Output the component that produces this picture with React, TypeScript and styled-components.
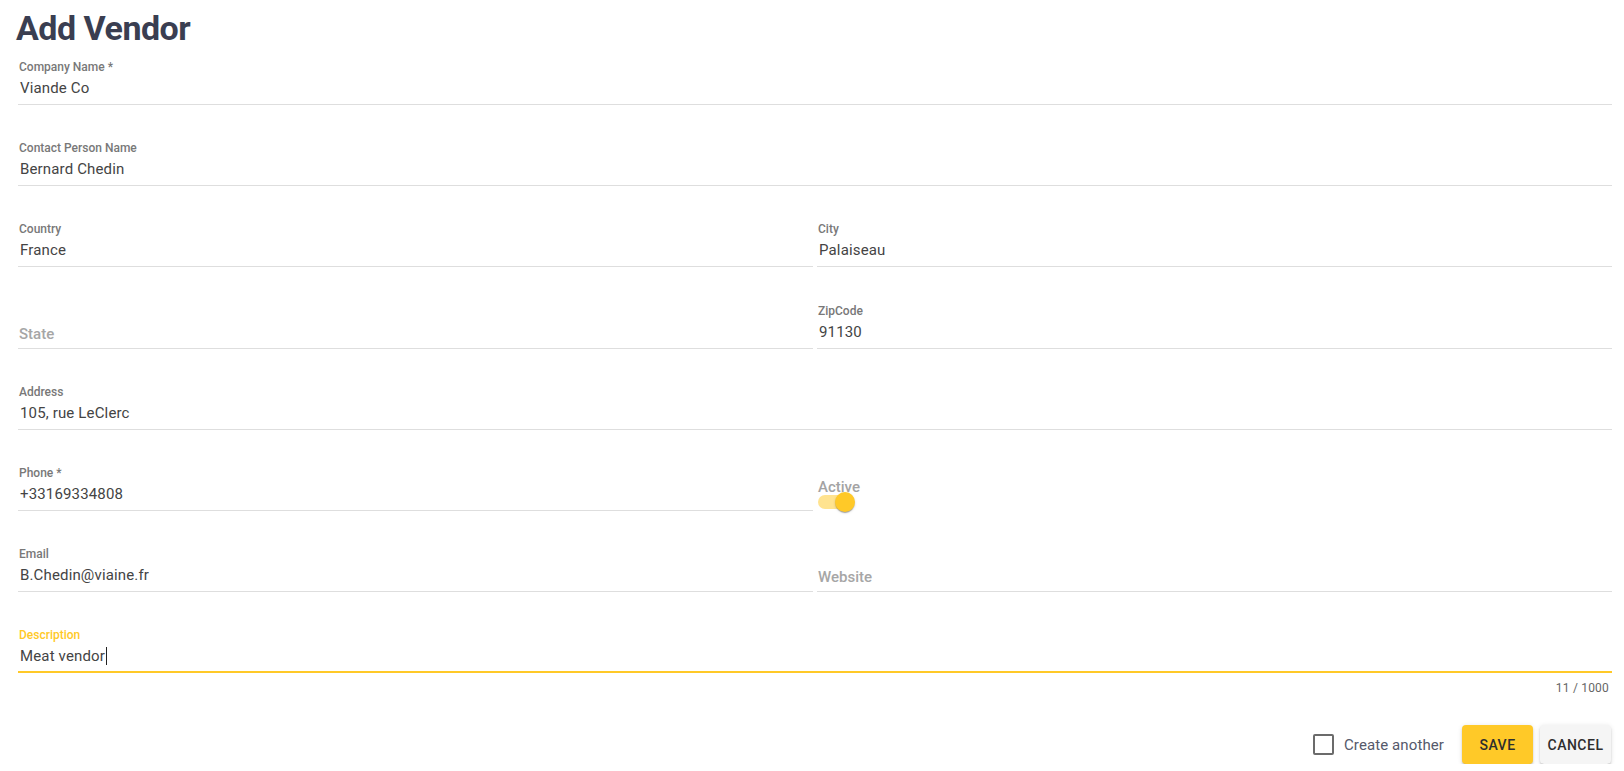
import styled, { createGlobalStyle } from "styled-components";

const GlobalStyle = createGlobalStyle`
    html, body {
        margin: 0;
        padding: 0;
        background: #ffffff;
        font-family: Roboto, "Liberation Sans", Arial, sans-serif;
    }
`;

const Page = styled.div`
    padding: 8px 12px 0 16px;
`;

const Title = styled.h1`
    margin: 0;
    font-size: 34px;
    line-height: 40px;
    font-weight: 700;
    letter-spacing: -0.5px;
    color: #3a3e51;
`;

const Form = styled.div`
    margin: 12px 0 0 2px;
    display: grid;
    grid-template-columns: 1fr 1fr;
    column-gap: 4px;
    row-gap: 36.2px;
`;

const Field = styled.div<{ $full?: boolean; $focused?: boolean; $plain?: boolean }>`
    grid-column: ${(p) => (p.$full ? "1 / -1" : "auto")};
    height: 45px;
    box-sizing: border-box;
    padding-left: 1px;
    border-bottom: ${(p) =>
        p.$plain ? "none" : p.$focused ? "2px solid #ffc928" : "1px solid #dedede"};
`;

const Label = styled.div<{ $focused?: boolean }>`
    height: 14px;
    font-size: 12px;
    line-height: 14px;
    font-weight: 500;
    color: ${(p) => (p.$focused ? "#ffc928" : "#787878")};
    margin-bottom: 4px;
`;

const Value = styled.div<{ $focused?: boolean }>`
    padding-left: 1px;
    font-size: 15px;
    line-height: 20px;
    letter-spacing: 0.15px;
    color: #444444;
    padding-bottom: ${(p) => (p.$focused ? "5px" : "6px")};
    display: flex;
    align-items: center;
`;

const Placeholder = styled.div`
    margin-top: 20px;
    font-size: 15px;
    line-height: 20px;
    font-weight: 500;
    color: #a6a6a6;
`;

const Caret = styled.span`
    display: inline-block;
    width: 1px;
    height: 18px;
    margin-left: 1px;
    background: #222222;
`;

const SwitchLabel = styled.div`
    padding-top: 13px;
    font-size: 15px;
    line-height: 16px;
    font-weight: 500;
    color: #a3a3a3;
`;

const SwitchTrack = styled.div<{ $on?: boolean }>`
    position: relative;
    width: 34px;
    height: 14px;
    border-radius: 7px;
    background: ${(p) => (p.$on ? "#ffe38f" : "#bdbdbd")};
`;

const SwitchThumb = styled.span<{ $on?: boolean }>`
    position: absolute;
    top: -3px;
    left: ${(p) => (p.$on ? "17px" : "-3px")};
    width: 20px;
    height: 20px;
    border-radius: 50%;
    background: ${(p) => (p.$on ? "#ffc928" : "#fafafa")};
    box-shadow: 0 2px 1px -1px rgba(0, 0, 0, 0.2), 0 1px 1px 0 rgba(0, 0, 0, 0.14),
        0 1px 3px 0 rgba(0, 0, 0, 0.12);
`;

const Counter = styled.div`
    margin: 8px 3px 0 0;
    text-align: right;
    font-size: 12px;
    line-height: 14px;
    color: #666666;
    letter-spacing: 0.2px;
`;

const Footer = styled.div`
    margin-top: 30px;
    padding-right: 1px;
    display: flex;
    justify-content: flex-end;
    align-items: center;
`;

const CheckRow = styled.label`
    display: flex;
    align-items: center;
    gap: 10px;
    margin-right: 18px;
    font-size: 15px;
    letter-spacing: 0.1px;
    color: #55596b;
`;

const CheckBox = styled.span`
    width: 21px;
    height: 21px;
    box-sizing: border-box;
    border: 2px solid #6b6b6b;
    border-radius: 2px;
`;

const Button = styled.button<{ $primary?: boolean }>`
    height: 39px;
    min-width: 71px;
    padding: 0 7px;
    border: none;
    border-radius: 4px;
    font-family: Roboto, "Liberation Sans", Arial, sans-serif;
    font-size: 14px;
    font-weight: 500;
    letter-spacing: 0.5px;
    text-transform: uppercase;
    color: #2e2e2e;
    background: ${(p) => (p.$primary ? "#ffc928" : "#f5f5f5")};
    margin-left: ${(p) => (p.$primary ? "0" : "7px")};
    box-shadow: 0 3px 1px -2px rgba(0, 0, 0, 0.2), 0 2px 2px 0 rgba(0, 0, 0, 0.14),
        0 1px 5px 0 rgba(0, 0, 0, 0.12);
    cursor: pointer;
`;

type Entry = { label: string; value?: string; full?: boolean };

function TextField({ label, value, full }: Entry) {
    if (!value) {
        return (
            <Field $full={full}>
                <Placeholder>{label}</Placeholder>
            </Field>
        );
    }
    return (
        <Field $full={full}>
            <Label>{label}</Label>
            <Value>{value}</Value>
        </Field>
    );
}

export default function App() {
    return (
        <Page>
            <GlobalStyle />
            <Title>Add Vendor</Title>
            <Form>
                <TextField label="Company Name *" value="Viande Co" full />
                <TextField label="Contact Person Name" value="Bernard Chedin" full />
                <TextField label="Country" value="France" />
                <TextField label="City" value="Palaiseau" />
                <TextField label="State" />
                <TextField label="ZipCode" value="91130" />
                <TextField label="Address" value="105, rue LeClerc" full />
                <TextField label="Phone *" value="+33169334808" />
                <Field $plain>
                    <SwitchLabel>Active</SwitchLabel>
                    <SwitchTrack $on>
                        <SwitchThumb $on />
                    </SwitchTrack>
                </Field>
                <TextField label="Email" value="B.Chedin@viaine.fr" />
                <TextField label="Website" />
                <Field $full $focused>
                    <Label $focused>Description</Label>
                    <Value $focused>
                        Meat vendor
                        <Caret />
                    </Value>
                </Field>
            </Form>
            <Counter>11 / 1000</Counter>
            <Footer>
                <CheckRow>
                    <CheckBox />
                    Create another
                </CheckRow>
                <Button $primary>Save</Button>
                <Button>Cancel</Button>
            </Footer>
        </Page>
    );
}
